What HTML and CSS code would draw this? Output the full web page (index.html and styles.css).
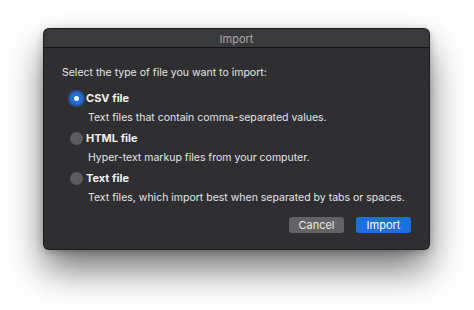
FILE: index.html
```html
<!DOCTYPE html>
<html lang="en">
<head>
    <meta charset="UTF-8">
    <title>Import</title>
    <link rel="stylesheet" href="styles.css">
</head>
<body>
    <div class="window">
        <div class="titlebar">Import</div>
        <div class="content">
            <p class="prompt">Select the type of file you want to import:</p>

            <div class="option">
                <span class="radio checked"></span>
                <span class="label">CSV file</span>
            </div>
            <p class="desc">Text files that contain comma-separated values.</p>

            <div class="option">
                <span class="radio"></span>
                <span class="label">HTML file</span>
            </div>
            <p class="desc">Hyper-text markup files from your computer.</p>

            <div class="option">
                <span class="radio"></span>
                <span class="label">Text file</span>
            </div>
            <p class="desc">Text files, which import best when separated by tabs or spaces.</p>

            <div class="buttons">
                <button class="btn">Cancel</button>
                <button class="btn primary">Import</button>
            </div>
        </div>
    </div>
</body>
</html>
```

FILE: styles.css
```css
body {
    margin: 0;
    padding: 29px 0 61px 44px;
    background-color: #ffffff;
    font-family: Inter, "Noto Sans", sans-serif;
    font-size: 10.5px;
    color: #e4e4e4;
}

.window {
    width: 385px;
    height: 220px;
    background-color: #2f2f31;
    border-radius: 5px;
    box-shadow: 0 0 0 1px #1c1c1c, 0 2px 8px rgba(0, 0, 0, 0.3), 0 20px 36px rgba(0, 0, 0, 0.55);
    overflow: hidden;
}

.titlebar {
    height: 18px;
    line-height: 21px;
    text-align: center;
    color: #a8a8a8;
    font-size: 11px;
    background-color: #3a3a3c;
    border-bottom: 1px solid #121212;
}

.content {
    padding: 18px 18px 0 18px;
    white-space: nowrap;
}

.prompt {
    margin: 0 0 11px 0;
    line-height: 14px;
}

.option {
    display: flex;
    align-items: center;
    height: 14px;
    margin-left: 8px;
}

.radio {
    width: 13px;
    height: 13px;
    border-radius: 50%;
    background-color: #5d5d60;
    margin-right: 3px;
    box-sizing: border-box;
}

.radio.checked {
    background-color: #ffffff;
    border: 4px solid #1b6fe0;
    box-shadow: 0 0 0 2px rgba(40, 110, 220, 0.55);
}

.label {
    font-weight: bold;
    font-size: 11px;
    color: #f0f0f0;
}

.desc {
    margin: 6px 0 6px 26px;
    line-height: 14px;
}

.buttons {
    display: flex;
    justify-content: flex-end;
    gap: 12px;
    margin-top: 12px;
}

.btn {
    width: 55px;
    height: 16px;
    padding: 0;
    border: none;
    border-radius: 3px;
    background-color: #636366;
    color: #e8e8e8;
    font-family: inherit;
    font-size: 11px;
}

.btn.primary {
    background-color: #1a6fe3;
    color: #ffffff;
}
```
